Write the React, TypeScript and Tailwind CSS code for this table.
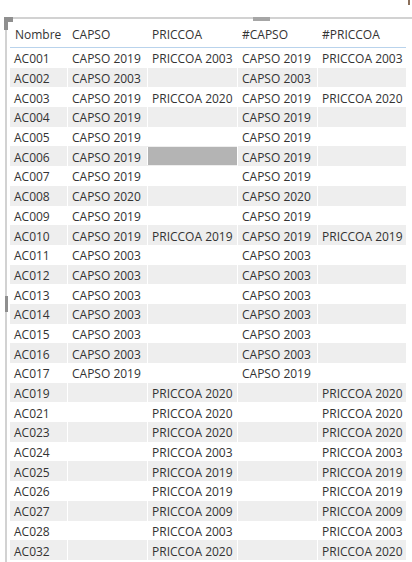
import React from "react";

type Row = [string, string, string | null, string, string];

const rows: Row[] = [
  ["AC001", "CAPSO 2019", "PRICCOA 2003", "CAPSO 2019", "PRICCOA 2003"],
  ["AC002", "CAPSO 2003", "", "CAPSO 2003", ""],
  ["AC003", "CAPSO 2019", "PRICCOA 2020", "CAPSO 2019", "PRICCOA 2020"],
  ["AC004", "CAPSO 2019", "", "CAPSO 2019", ""],
  ["AC005", "CAPSO 2019", "", "CAPSO 2019", ""],
  ["AC006", "CAPSO 2019", null, "CAPSO 2019", ""],
  ["AC007", "CAPSO 2019", "", "CAPSO 2019", ""],
  ["AC008", "CAPSO 2020", "", "CAPSO 2020", ""],
  ["AC009", "CAPSO 2019", "", "CAPSO 2019", ""],
  ["AC010", "CAPSO 2019", "PRICCOA 2019", "CAPSO 2019", "PRICCOA 2019"],
  ["AC011", "CAPSO 2003", "", "CAPSO 2003", ""],
  ["AC012", "CAPSO 2003", "", "CAPSO 2003", ""],
  ["AC013", "CAPSO 2003", "", "CAPSO 2003", ""],
  ["AC014", "CAPSO 2003", "", "CAPSO 2003", ""],
  ["AC015", "CAPSO 2003", "", "CAPSO 2003", ""],
  ["AC016", "CAPSO 2003", "", "CAPSO 2003", ""],
  ["AC017", "CAPSO 2019", "", "CAPSO 2019", ""],
  ["AC019", "", "PRICCOA 2020", "", "PRICCOA 2020"],
  ["AC021", "", "PRICCOA 2020", "", "PRICCOA 2020"],
  ["AC023", "", "PRICCOA 2020", "", "PRICCOA 2020"],
  ["AC024", "", "PRICCOA 2003", "", "PRICCOA 2003"],
  ["AC025", "", "PRICCOA 2019", "", "PRICCOA 2019"],
  ["AC026", "", "PRICCOA 2019", "", "PRICCOA 2019"],
  ["AC027", "", "PRICCOA 2009", "", "PRICCOA 2009"],
  ["AC028", "", "PRICCOA 2003", "", "PRICCOA 2003"],
  ["AC032", "", "PRICCOA 2020", "", "PRICCOA 2020"],
];

const headers = ["Nombre", "CAPSO", "PRICCOA", "#CAPSO", "#PRICCOA"];
const widths = ["w-[57px]", "w-[80px]", "w-[90px]", "w-[80px]", "w-[90px]"];

export default function App() {
  return (
    <div
      className="relative h-[562px] w-[412px] overflow-hidden bg-white text-[12px] text-[#333333]"
      style={{ fontFamily: '"Open Sans", "Noto Sans", sans-serif' }}
    >
      {/* frame handles */}
      <div className="absolute left-[408px] top-0 h-[5px] w-[2px] bg-[#8b6f5a]" />
      <div className="absolute left-[4px] top-[17px] h-[5px] w-[9px] bg-[#8f8f8f]" />
      <div className="absolute left-[4px] top-[17px] h-[13px] w-[4px] bg-[#8f8f8f]" />
      <div className="absolute left-[253px] top-[17px] h-[4px] w-[17px] bg-[#a6a6a6]" />
      <div className="absolute left-[5px] top-[296px] h-[16px] w-[3px] bg-[#8f8f8f]" />

      <div className="ml-[5px] mt-[17px] h-[545px] border-l-2 border-t-2 border-[#d2d2d2] pl-[3px] pt-[3px]">
        <div className="flex h-[26px] w-[396px] items-center border-b border-[#b9d3ec] pt-[1px]">
          {headers.map((h, i) => (
            <div key={h} className={`${widths[i]} shrink-0 whitespace-nowrap pl-[5px]`}>
              {h}
            </div>
          ))}
        </div>
        {rows.map((r, ri) => (
          <div
            key={r[0]}
            className={`flex h-[19.7px] w-[396px] items-stretch ${ri % 2 === 1 ? "bg-[#eeeeee]" : "bg-white"}`}
          >
            {r.map((c, ci) => (
              <div
                key={ci}
                className={`${widths[ci]} flex shrink-0 items-center whitespace-nowrap ${ci > 0 ? "border-l border-white" : ""} ${c === null ? "my-[1px] bg-[#b4b4b4]" : "pl-[4px] pt-[3px]"}`}
              >
                {c}
              </div>
            ))}
          </div>
        ))}
      </div>
    </div>
  );
}
